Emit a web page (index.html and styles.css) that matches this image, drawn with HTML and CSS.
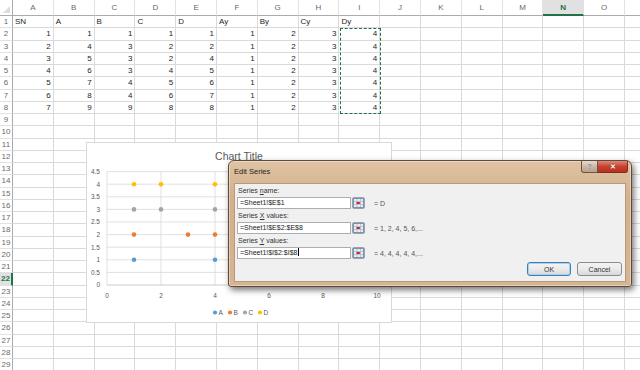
FILE: index.html
```html
<!DOCTYPE html>
<html lang="en">
<head>
  <meta charset="UTF-8">
  <meta name="viewport" content="width=device-width, initial-scale=1.0">
  <title>Edit Series</title>
  <link rel="stylesheet" href="styles.css">
</head>
<body>

  <div class="workbook">
    <div class="sheet" id="sheet"></div>

    <!-- copy marquee around I2:I8 -->
    <div class="marquee"></div>

    <div class="chart">
      <svg width="304" height="179" viewBox="0 0 304 179">
        <text class="chart-title" x="152" y="17" text-anchor="middle">Chart Title</text>

        <g class="grid">
          <line x1="20" y1="28.6" x2="290" y2="28.6"/>
          <line x1="20" y1="41.2" x2="290" y2="41.2"/>
          <line x1="20" y1="53.8" x2="290" y2="53.8"/>
          <line x1="20" y1="66.4" x2="290" y2="66.4"/>
          <line x1="20" y1="79" x2="290" y2="79"/>
          <line x1="20" y1="91.6" x2="290" y2="91.6"/>
          <line x1="20" y1="104.2" x2="290" y2="104.2"/>
          <line x1="20" y1="116.8" x2="290" y2="116.8"/>
          <line x1="20" y1="129.4" x2="290" y2="129.4"/>
          <line x1="20" y1="28.6" x2="20" y2="142"/>
          <line x1="74" y1="28.6" x2="74" y2="142"/>
          <line x1="128" y1="28.6" x2="128" y2="142"/>
          <line x1="182" y1="28.6" x2="182" y2="142"/>
          <line x1="236" y1="28.6" x2="236" y2="142"/>
          <line x1="290" y1="28.6" x2="290" y2="142"/>
        </g>
        <line class="axis" x1="20" y1="142" x2="290" y2="142"/>

        <g class="tick y-ticks" text-anchor="end">
          <text x="13" y="31">4.5</text>
          <text x="13" y="43.6">4</text>
          <text x="13" y="56.2">3.5</text>
          <text x="13" y="68.8">3</text>
          <text x="13" y="81.4">2.5</text>
          <text x="13" y="94">2</text>
          <text x="13" y="106.6">1.5</text>
          <text x="13" y="119.2">1</text>
          <text x="13" y="131.8">0.5</text>
          <text x="13" y="144.4">0</text>
        </g>
        <g class="tick x-ticks" text-anchor="middle">
          <text x="20" y="154.5">0</text>
          <text x="74" y="154.5">2</text>
          <text x="128" y="154.5">4</text>
          <text x="182" y="154.5">6</text>
          <text x="236" y="154.5">8</text>
          <text x="290" y="154.5">10</text>
        </g>

        <g class="series-d">
          <circle cx="47" cy="41.2" r="2.3"/><circle cx="74" cy="41.2" r="2.3"/>
          <circle cx="128" cy="41.2" r="2.3"/><circle cx="155" cy="41.2" r="2.3"/>
          <circle cx="182" cy="41.2" r="2.3"/><circle cx="209" cy="41.2" r="2.3"/>
          <circle cx="236" cy="41.2" r="2.3"/>
        </g>
        <g class="series-c">
          <circle cx="47" cy="66.4" r="2.3"/><circle cx="74" cy="66.4" r="2.3"/>
          <circle cx="128" cy="66.4" r="2.3"/><circle cx="155" cy="66.4" r="2.3"/>
          <circle cx="182" cy="66.4" r="2.3"/><circle cx="236" cy="66.4" r="2.3"/>
        </g>
        <g class="series-b">
          <circle cx="47" cy="91.6" r="2.3"/><circle cx="101" cy="91.6" r="2.3"/>
          <circle cx="128" cy="91.6" r="2.3"/><circle cx="263" cy="91.6" r="2.3"/>
        </g>
        <g class="series-a">
          <circle cx="47" cy="116.8" r="2.3"/><circle cx="128" cy="116.8" r="2.3"/>
          <circle cx="155" cy="116.8" r="2.3"/><circle cx="182" cy="116.8" r="2.3"/>
          <circle cx="209" cy="116.8" r="2.3"/><circle cx="236" cy="116.8" r="2.3"/>
          <circle cx="263" cy="116.8" r="2.3"/>
        </g>

        <!-- legend -->
        <g class="tick legend">
          <circle class="dot-a" cx="128" cy="169.5" r="2.1"/><text x="131.5" y="172">A</text>
          <circle class="dot-b" cx="143" cy="169.5" r="2.1"/><text x="146.5" y="172">B</text>
          <circle class="dot-c" cx="158" cy="169.5" r="2.1"/><text x="161.5" y="172">C</text>
          <circle class="dot-d" cx="173" cy="169.5" r="2.1"/><text x="176.5" y="172">D</text>
        </g>
      </svg>
    </div>

    <div class="dialog">
      <div class="dialog-title">
        <span>Edit Series</span>
        <div class="caption-buttons">
          <span class="cap-help">?</span>
          <span class="cap-close">&#x2715;</span>
        </div>
      </div>

      <div class="dialog-body">
        <div class="field-label">Series <u>n</u>ame:</div>
        <div class="field-row">
          <div class="ref-input">=Sheet1!$E$1</div>
          <span class="ref-btn">
            <svg width="11" height="10" viewBox="0 0 11 10">
              <rect x="0.5" y="0.5" width="10" height="9" fill="#e6edf6" stroke="#7f93ad"/>
              <path d="M1 3.5h9M1 6.5h9M4 1v8M7.5 1v8" stroke="#aebdd0" stroke-width="0.8"/>
              <path d="M3.5 4h3l1 1-1 1h-3z" fill="#d3242b"/>
            </svg>
          </span>
          <span class="ref-value">= D</span>
        </div>

        <div class="field-label">Series <u>X</u> values:</div>
        <div class="field-row">
          <div class="ref-input">=Sheet1!$E$2:$E$8</div>
          <span class="ref-btn">
            <svg width="11" height="10" viewBox="0 0 11 10">
              <rect x="0.5" y="0.5" width="10" height="9" fill="#e6edf6" stroke="#7f93ad"/>
              <path d="M1 3.5h9M1 6.5h9M4 1v8M7.5 1v8" stroke="#aebdd0" stroke-width="0.8"/>
              <path d="M3.5 4h3l1 1-1 1h-3z" fill="#d3242b"/>
            </svg>
          </span>
          <span class="ref-value">= 1, 2, 4, 5, 6,...</span>
        </div>

        <div class="field-label">Series <u>Y</u> values:</div>
        <div class="field-row">
          <div class="ref-input">=Sheet1!$I$2:$I$8<span class="caret"></span></div>
          <span class="ref-btn">
            <svg width="11" height="10" viewBox="0 0 11 10">
              <rect x="0.5" y="0.5" width="10" height="9" fill="#e6edf6" stroke="#7f93ad"/>
              <path d="M1 3.5h9M1 6.5h9M4 1v8M7.5 1v8" stroke="#aebdd0" stroke-width="0.8"/>
              <path d="M3.5 4h3l1 1-1 1h-3z" fill="#d3242b"/>
            </svg>
          </span>
          <span class="ref-value">= 4, 4, 4, 4, 4,...</span>
        </div>

        <div class="dialog-actions">
          <button class="btn btn-default">OK</button>
          <button class="btn">Cancel</button>
        </div>
      </div>
    </div>
  </div>

  <script>
    // Build the worksheet grid: column headers, row numbers and cells
    // (the last column is only partly on screen, so it gets no letter)
    const columns = 'ABCDEFGHIJKLMNO'.split('').concat(['']);
    const rowCount = 29;
    const activeColumn = 'N';
    const activeRow = 22;

    const data = [
      ['SN', 'A', 'B', 'C', 'D', 'Ay', 'By', 'Cy', 'Dy'],
      [1, 1, 1, 1, 1, 1, 2, 3, 4],
      [2, 4, 3, 2, 2, 1, 2, 3, 4],
      [3, 5, 3, 2, 4, 1, 2, 3, 4],
      [4, 6, 3, 4, 5, 1, 2, 3, 4],
      [5, 7, 4, 5, 6, 1, 2, 3, 4],
      [6, 8, 4, 6, 7, 1, 2, 3, 4],
      [7, 9, 9, 8, 8, 1, 2, 3, 4]
    ];

    const sheet = document.getElementById('sheet');

    const corner = document.createElement('div');
    corner.className = 'corner';
    sheet.appendChild(corner);

    columns.forEach(letter => {
      const head = document.createElement('div');
      head.className = 'col-head' + (letter === activeColumn ? ' active' : '');
      head.textContent = letter;
      sheet.appendChild(head);
    });

    for (let r = 1; r <= rowCount; r++) {
      const rowHead = document.createElement('div');
      rowHead.className = 'row-head' + (r === activeRow ? ' active' : '');
      rowHead.textContent = r;
      sheet.appendChild(rowHead);

      const values = data[r - 1] || [];
      columns.forEach((letter, c) => {
        const cell = document.createElement('div');
        cell.className = 'cell';
        const value = values[c];
        if (value !== undefined) {
          cell.textContent = value;
          if (typeof value === 'number') cell.classList.add('num');
        }
        sheet.appendChild(cell);
      });
    }
  </script>

</body>
</html>
```

FILE: styles.css
```css
* {
  box-sizing: border-box;
}
body {
  margin: 0;
  font-family: "Liberation Sans", Arial, sans-serif;
  background-color: #fff;
  overflow: hidden;
}
.workbook {
  position: relative;
  width: 640px;
  height: 370px;
  overflow: hidden;
}

/* worksheet grid */
.sheet {
  display: grid;
  grid-template-columns: 13px repeat(16, 40.8px);
  grid-template-rows: 16px repeat(29, 12.25px);
  font-size: 8px;
  color: #1e1e1e;
}
.corner {
  position: relative;
  border-right: 1px solid #ababab;
  border-bottom: 1px solid #ababab;
}
.corner::after {
  content: "";
  position: absolute;
  right: 2px;
  bottom: 2px;
  border-left: 7px solid transparent;
  border-bottom: 7px solid #dcdcdc;
}
.col-head {
  color: #6a6a6a;
  text-align: center;
  line-height: 15px;
  border-right: 1px solid #e2e2e2;
  border-bottom: 1px solid #ababab;
}
.col-head.active {
  background-color: #e1e1e1;
  color: #217346;
  font-weight: bold;
  border-bottom: 2px solid #217346;
}
.row-head {
  color: #6a6a6a;
  text-align: center;
  line-height: 11.5px;
  border-right: 1px solid #ababab;
  border-bottom: 1px solid #e2e2e2;
}
.row-head.active {
  background-color: #e1e1e1;
  color: #217346;
  font-weight: bold;
  border-right: 2px solid #217346;
}
.cell {
  padding: 0 2px;
  line-height: 11.5px;
  white-space: nowrap;
  overflow: hidden;
  border-right: 1px solid #dadada;
  border-bottom: 1px solid #dadada;
}
.cell.num {
  text-align: right;
}
.marquee {
  position: absolute;
  left: 340px;
  top: 28px;
  width: 41px;
  height: 86px;
  border: 1.5px dashed #217346;
}

/* chart */
.chart {
  position: absolute;
  left: 86px;
  top: 142px;
  width: 306px;
  height: 181px;
  background-color: #fff;
  border: 1px solid #d9d9d9;
}
.chart svg {
  display: block;
}
.chart-title {
  font-size: 10.5px;
  fill: #595959;
}
.grid line {
  stroke: #d9d9d9;
  stroke-width: 0.8;
}
.axis {
  stroke: #bfbfbf;
  stroke-width: 0.8;
}
.tick {
  font-size: 6.5px;
  fill: #595959;
}
.series-a circle, .dot-a {
  fill: #5b9bd5;
}
.series-b circle, .dot-b {
  fill: #ed7d31;
}
.series-c circle, .dot-c {
  fill: #a5a5a5;
}
.series-d circle, .dot-d {
  fill: #ffc000;
}

/* edit series dialog */
.dialog {
  position: absolute;
  left: 228px;
  top: 160px;
  width: 404px;
  height: 127px;
  padding: 0 5px 5px;
  background: linear-gradient(#dfc3a4, #d4b08b 30%, #d6b592);
  border: 1px solid #5f4a37;
  border-radius: 6px 6px 3px 3px;
  box-shadow: 2px 3px 6px rgba(0, 0, 0, 0.55), inset 0 0 0 1px rgba(255, 255, 255, 0.35);
  font-size: 7px;
  color: #1e1e1e;
}
.dialog-title {
  display: flex;
  justify-content: space-between;
  align-items: flex-start;
  height: 22px;
}
.dialog-title span:first-child {
  font-size: 7.5px;
  line-height: 22px;
}
.caption-buttons {
  display: flex;
  margin-right: -2px;
}
.cap-help, .cap-close {
  display: flex;
  align-items: center;
  justify-content: center;
  height: 12px;
  color: #fff;
  border: 1px solid #6b5540;
  border-top: none;
}
.cap-help {
  width: 17px;
  font-size: 9px;
  font-weight: bold;
  color: #7d7d7d;
  text-shadow: 0 0 1px #fff;
  background: linear-gradient(#e6dbd0, #c9b7a5 50%, #b9a28b);
  border-radius: 0 0 0 3px;
}
.cap-close {
  width: 30px;
  font-size: 7px;
  font-weight: bold;
  text-shadow: 0 0 1px #6b1a10;
  background: linear-gradient(#e08677, #c8412f 50%, #b8321f);
  border-left: none;
  border-color: #7c2d22;
  border-radius: 0 0 3px 0;
}
.dialog-body {
  height: 99px;
  padding: 2px 3px 0 2px;
  background-color: #f0f0f0;
  border: 1px solid #b79a7d;
}
.field-label {
  height: 9px;
  line-height: 9px;
  padding-left: 1px;
  margin-bottom: 2px;
  color: #333;
}
.field-row {
  display: flex;
  align-items: center;
  height: 12px;
  margin-bottom: 2px;
}
.ref-input {
  width: 114px;
  height: 12px;
  line-height: 10px;
  padding-left: 2px;
  background-color: #fff;
  border: 1px solid #abadb3;
  color: #222;
  white-space: nowrap;
}
.caret {
  display: inline-block;
  width: 1px;
  height: 8px;
  margin-left: 1px;
  vertical-align: -1px;
  background-color: #000;
}
.ref-btn {
  display: flex;
  align-items: center;
  justify-content: center;
  width: 13px;
  height: 12px;
  margin-left: 1px;
  background: linear-gradient(#f4f4f4, #dcdcdc);
  border: 1px solid #9aa3ad;
  border-radius: 2px;
}
.ref-value {
  margin-left: 9px;
  color: #555;
}
.dialog-actions {
  display: flex;
  justify-content: flex-end;
  gap: 6px;
  margin-top: 3px;
}
.btn {
  width: 44px;
  height: 14px;
  padding: 0;
  font-family: inherit;
  font-size: 7px;
  color: #333;
  background: linear-gradient(#f3f3f3, #ebebeb 50%, #d8d8d8);
  border: 1px solid #8d8d8d;
  border-radius: 3px;
}
.btn + .btn {
  width: 45px;
}
.btn-default {
  border-color: #3c7fb1;
  box-shadow: inset 0 0 0 1px #a6d2ef;
}
```
